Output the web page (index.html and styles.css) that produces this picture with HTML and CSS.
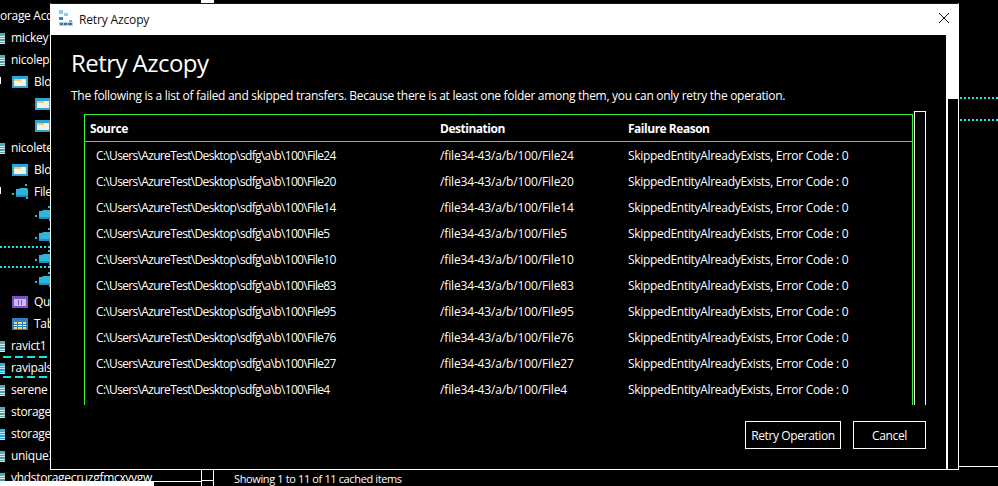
FILE: index.html
```html
<!DOCTYPE html>
<html lang="en">
<head>
<meta charset="utf-8">
<title>Retry Azcopy</title>
<link rel="stylesheet" href="styles.css">
</head>
<body>
<svg class="defs" width="0" height="0" aria-hidden="true">
  <symbol id="acct" viewBox="0 0 16 16">
    <rect x="1" y="4" width="15" height="11" fill="#dfe9ea"/>
    <rect x="1" y="4" width="15" height="3" fill="#3fb2c4"/>
    <rect x="3" y="8" width="13" height="1" fill="#5f9ea6"/>
    <rect x="3" y="10" width="13" height="2" fill="#4f9aa4"/>
    <rect x="3" y="13" width="13" height="1" fill="#5f9ea6"/>
  </symbol>
  <symbol id="acct2" viewBox="0 0 16 16">
    <rect x="1" y="4" width="15" height="11" fill="#bfeaf4"/>
    <rect x="1" y="4" width="15" height="3" fill="#1fb6e4"/>
    <rect x="3" y="8" width="13" height="1" fill="#2aa6d0"/>
    <rect x="3" y="10" width="13" height="2" fill="#22a4d4"/>
    <rect x="3" y="13" width="13" height="1" fill="#2aa6d0"/>
  </symbol>
  <symbol id="blob" viewBox="0 0 16 16">
    <rect x="0" y="3" width="16" height="12" fill="#2ea6d4"/>
    <rect x="2" y="6" width="12" height="7" fill="#f6f1e2"/>
    <rect x="2" y="6" width="7" height="2" fill="#f5c76a"/>
  </symbol>
  <symbol id="file" viewBox="0 0 16 16">
    <path d="M4 6h3l1-1h7l1 2v7H4z" fill="#2fb4dc"/>
    <rect x="4" y="12" width="12" height="2" fill="#1f8fc0"/>
    <rect x="0" y="10" width="2" height="2" fill="#2fb4dc"/>
    <rect x="13" y="1" width="2" height="2" fill="#2fb4dc"/>
    <rect x="14" y="14" width="2" height="2" fill="#2fb4dc"/>
  </symbol>
  <symbol id="queue" viewBox="0 0 16 16">
    <rect x="0" y="3" width="16" height="12" fill="#7a4fc4"/>
    <rect x="2" y="6" width="12" height="7" fill="#cdbcf0"/>
    <rect x="6" y="7" width="1" height="5" fill="#7a4fc4"/>
    <rect x="9" y="7" width="1" height="5" fill="#7a4fc4"/>
  </symbol>
  <symbol id="table" viewBox="0 0 16 16">
    <rect x="0" y="3" width="16" height="12" fill="#2a7fc4"/>
    <rect x="2" y="7" width="3" height="2" fill="#f2d66a"/>
    <rect x="6" y="7" width="4" height="2" fill="#f2d66a"/>
    <rect x="11" y="7" width="3" height="2" fill="#f2d66a"/>
    <rect x="2" y="10" width="3" height="1" fill="#fff"/>
    <rect x="6" y="10" width="4" height="1" fill="#fff"/>
    <rect x="11" y="10" width="3" height="1" fill="#fff"/>
    <rect x="2" y="12" width="3" height="2" fill="#f2d66a"/>
    <rect x="6" y="12" width="4" height="2" fill="#f2d66a"/>
    <rect x="11" y="12" width="3" height="2" fill="#f2d66a"/>
  </symbol>
</svg>

<aside class="tree">
  <div class="row head">orage Acc</div>
  <div class="row row-l0"><svg class="ic"><use href="#acct"/></svg>mickey1</div>
  <div class="row row-l0"><svg class="ic"><use href="#acct"/></svg>nicolep</div>
  <div class="row row-l1 exp"><svg class="ic"><use href="#blob"/></svg>Blo</div>
  <div class="row row-l2"><svg class="ic"><use href="#blob"/></svg></div>
  <div class="row row-l2"><svg class="ic"><use href="#blob"/></svg></div>
  <div class="row row-l0"><svg class="ic"><use href="#acct"/></svg>nicolete</div>
  <div class="row row-l1"><svg class="ic"><use href="#blob"/></svg>Blo</div>
  <div class="row row-l1 exp"><svg class="ic"><use href="#file"/></svg>File</div>
  <div class="row row-l2"><svg class="ic"><use href="#file"/></svg></div>
  <div class="row row-l2"><svg class="ic"><use href="#file"/></svg></div>
  <div class="row row-l2 dotted"><svg class="ic"><use href="#file"/></svg></div>
  <div class="row row-l2"><svg class="ic"><use href="#file"/></svg></div>
  <div class="row row-l1"><svg class="ic"><use href="#queue"/></svg>Qu</div>
  <div class="row row-l1"><svg class="ic"><use href="#table"/></svg>Tab</div>
  <div class="row row-l0"><svg class="ic"><use href="#acct"/></svg>ravict1</div>
  <div class="row row-l0 dashed"><svg class="ic"><use href="#acct2"/></svg>ravipals</div>
  <div class="row row-l0"><svg class="ic"><use href="#acct"/></svg>serene</div>
  <div class="row row-l0"><svg class="ic"><use href="#acct"/></svg>storage</div>
  <div class="row row-l0"><svg class="ic"><use href="#acct2"/></svg>storage</div>
  <div class="row row-l0"><svg class="ic"><use href="#acct"/></svg>unique3</div>
  <div class="row row-l0"><svg class="ic"><use href="#acct"/></svg>vhdstoragecruzgfmcxyvgw</div>
</aside>

<div class="status">Showing 1 to 11 of 11 cached items</div>
<div class="right-dot right-dot-a"></div>
<div class="right-dot right-dot-b"></div>
<div class="frag frag-tick"></div>
<div class="frag frag-block"></div>
<div class="frag frag-hline"></div>
<div class="frag frag-box"></div>
<div class="frag frag-right"></div>

<section class="dialog">
  <header class="titlebar">
    <svg class="appicon" viewBox="0 0 16 16" aria-hidden="true">
      <rect x="1" y="0" width="4" height="4" fill="#8ccaf5"/>
      <rect x="6" y="3" width="4" height="3" fill="#8ccaf5"/>
      <rect x="1" y="7" width="4" height="3" fill="#1e88d8"/>
      <rect x="11" y="10" width="3" height="2" fill="#6fb0e8"/>
      <rect x="1" y="12" width="14" height="4" fill="#c4d2dc"/>
      <rect x="2" y="13" width="3" height="2" fill="#2a6ea6"/>
      <rect x="6" y="13" width="3" height="2" fill="#2a6ea6"/>
      <rect x="10" y="13" width="4" height="2" fill="#2a6ea6"/>
    </svg>
    <span class="wintitle">Retry Azcopy</span>
    <svg class="close" viewBox="0 0 10 10" aria-hidden="true"><path d="M0 0l10 10M10 0L0 10" stroke="#111" stroke-width="1" fill="none"/></svg>
  </header>
  <div class="body">
    <div class="content">
      <h1>Retry Azcopy</h1>
      <p class="intro">The following is a list of failed and skipped transfers. Because there is at least one folder among them, you can only retry the operation.</p>
      <div class="listwrap">
        <div class="list">
          <div class="cols thead"><span>Source</span><span>Destination</span><span>Failure Reason</span></div>
          <div class="rows">
            <div class="cols"><span>C:\Users\AzureTest\Desktop\sdfg\a\b\100\File24</span><span>/file34-43/a/b/100/File24</span><span>SkippedEntityAlreadyExists, Error Code : 0</span></div>
            <div class="cols"><span>C:\Users\AzureTest\Desktop\sdfg\a\b\100\File20</span><span>/file34-43/a/b/100/File20</span><span>SkippedEntityAlreadyExists, Error Code : 0</span></div>
            <div class="cols"><span>C:\Users\AzureTest\Desktop\sdfg\a\b\100\File14</span><span>/file34-43/a/b/100/File14</span><span>SkippedEntityAlreadyExists, Error Code : 0</span></div>
            <div class="cols"><span>C:\Users\AzureTest\Desktop\sdfg\a\b\100\File5</span><span>/file34-43/a/b/100/File5</span><span>SkippedEntityAlreadyExists, Error Code : 0</span></div>
            <div class="cols"><span>C:\Users\AzureTest\Desktop\sdfg\a\b\100\File10</span><span>/file34-43/a/b/100/File10</span><span>SkippedEntityAlreadyExists, Error Code : 0</span></div>
            <div class="cols"><span>C:\Users\AzureTest\Desktop\sdfg\a\b\100\File83</span><span>/file34-43/a/b/100/File83</span><span>SkippedEntityAlreadyExists, Error Code : 0</span></div>
            <div class="cols"><span>C:\Users\AzureTest\Desktop\sdfg\a\b\100\File95</span><span>/file34-43/a/b/100/File95</span><span>SkippedEntityAlreadyExists, Error Code : 0</span></div>
            <div class="cols"><span>C:\Users\AzureTest\Desktop\sdfg\a\b\100\File76</span><span>/file34-43/a/b/100/File76</span><span>SkippedEntityAlreadyExists, Error Code : 0</span></div>
            <div class="cols"><span>C:\Users\AzureTest\Desktop\sdfg\a\b\100\File27</span><span>/file34-43/a/b/100/File27</span><span>SkippedEntityAlreadyExists, Error Code : 0</span></div>
            <div class="cols"><span>C:\Users\AzureTest\Desktop\sdfg\a\b\100\File4</span><span>/file34-43/a/b/100/File4</span><span>SkippedEntityAlreadyExists, Error Code : 0</span></div>
          </div>
        </div>
        <div class="scrollbar"></div>
      </div>
      <div class="actions">
        <button class="btn btn-retry">Retry Operation</button>
        <button class="btn btn-cancel">Cancel</button>
      </div>
    </div>
    <div class="side"><div class="side-inner"></div></div>
  </div>
</section>
</body>
</html>
```
FILE: styles.css
```css
* { box-sizing: border-box; }
html, body { margin: 0; height: 100%; }
body {
  position: relative;
  width: 998px;
  height: 486px;
  overflow: hidden;
  background: #000;
  color: #fff;
  font-family: "Open Sans", "Liberation Sans", sans-serif;
  font-size: 12px;
}
.defs { position: absolute; }

.tree { padding-top: 4px; width: 200px; }
.row {
  position: relative;
  display: flex;
  align-items: center;
  gap: 6px;
  height: 22px;
  font-size: 12px;
  letter-spacing: -0.3px;
  white-space: nowrap;
}
.row-l0 { margin-left: -11px; }
.row-l1 { padding-left: 12px; }
.row-l2 { padding-left: 35px; }
.ic { width: 16px; height: 16px; flex: none; }
.exp::before {
  content: "";
  position: absolute;
  left: 0;
  top: 7px;
  width: 1px;
  height: 7px;
  background: #fff;
}
.dotted, .right-dot {
  background-image:
    repeating-linear-gradient(90deg, #18e6e6 0 2px, transparent 2px 4px),
    repeating-linear-gradient(90deg, #18e6e6 0 2px, transparent 2px 4px);
  background-repeat: no-repeat;
}
.dotted { background-size: 100% 2px, 100% 2px; background-position: 0 0, 0 100%; }
.dashed {
  background-image:
    repeating-linear-gradient(90deg, #18e6e6 0 8px, transparent 8px 12px),
    repeating-linear-gradient(90deg, #18e6e6 0 8px, transparent 8px 12px);
  background-repeat: no-repeat;
  background-size: 100% 2px, 100% 2px;
  background-position: 14px 0, 14px 100%;
}

.status { position: absolute; left: 234px; top: 471px; font-size: 11px; letter-spacing: -0.37px; }
.right-dot { position: absolute; left: 960px; width: 38px; height: 2px; background-size: 100% 2px; }
.right-dot-a { top: 97px; }
.right-dot-b { top: 119px; }

.frag { position: absolute; }
.frag-tick { left: 201px; top: 0; width: 13px; height: 4px; background: #fff; }
.frag-block { left: 0; top: 481px; width: 154px; height: 5px; background: #fff; }
.frag-hline { left: 154px; top: 481px; width: 47px; height: 1px; background: #fff; }
.frag-box { left: 201px; top: 470px; width: 13px; height: 16px; border-left: 1px solid #fff; border-right: 1px solid #fff; background: linear-gradient(#fff, #fff) 0 10px / 100% 1px no-repeat; }
.frag-right { left: 959px; top: 466px; width: 39px; height: 1px; background: #fff; }

.dialog {
  position: absolute;
  left: 50px;
  top: 3px;
  width: 909px;
  height: 467px;
  background: #fff;
  border-left: 1px solid #fff;
  border-right: 1px solid #fff;
  border-bottom: 1px solid #fff;
  border-top: 1px solid #1a1a1a;
  display: flex;
  flex-direction: column;
}
.titlebar {
  height: 31px;
  display: flex;
  align-items: center;
  padding: 0 9px 0 7px;
  background: #fff;
  color: #111;
  flex: none;
}
.appicon { width: 16px; height: 16px; flex: none; margin-top: -3px; }
.wintitle { margin-left: 5px; font-size: 12px; letter-spacing: -0.15px; margin-top: -1px; }
.close { width: 10px; height: 10px; margin-left: auto; margin-top: -3px; }
.body { flex: 1; display: flex; background: #000; min-height: 0; }
.content { flex: none; width: 895px; padding-left: 20px; display: flex; flex-direction: column; }
h1 { margin: 12px 0 0; font-size: 24px; line-height: 32px; font-weight: 400; letter-spacing: -0.55px; }
.intro { margin: 9px 0 0; font-size: 12px; line-height: 16px; letter-spacing: -0.29px; white-space: nowrap; }
.listwrap { display: flex; align-items: flex-start; margin: 7px 0 0 13px; gap: 1px; height: 294px; }
.list { width: 829px; height: 291px; margin-top: 3px; border: 1px solid #3bf03b; border-bottom: none; overflow: hidden; }
.scrollbar { width: 12px; height: 294px; border: 1px solid #fff; border-bottom: none; }
.cols { display: grid; height: 26px; align-items: center; white-space: nowrap; font-size: 12px; }
.thead { height: 27px; padding-left: 5px; font-weight: 700; letter-spacing: -0.48px; border-bottom: 1px solid #3bf03b; grid-template-columns: 350px 188px 1fr; }
.rows .cols { padding-left: 11px; grid-template-columns: 344px 188px 1fr; }
.rows .cols span:nth-child(1) { letter-spacing: -0.67px; }
.rows .cols span:nth-child(2) { letter-spacing: -0.15px; }
.rows .cols span:nth-child(3) { letter-spacing: -0.31px; }
.actions { display: flex; justify-content: flex-end; gap: 12px; margin-top: 16px; padding-right: 20px; }
.btn { height: 28px; background: #000; color: #fff; border: 1px solid #fff; font: inherit; font-size: 12px; letter-spacing: -0.38px; padding: 0; }
.btn-retry { width: 96px; }
.btn-cancel { width: 73px; }
.side { flex: 1; background: #fff; padding: 64px 0 0 2px; min-width: 0; }
.side-inner { height: 100%; background: #000; }
```
